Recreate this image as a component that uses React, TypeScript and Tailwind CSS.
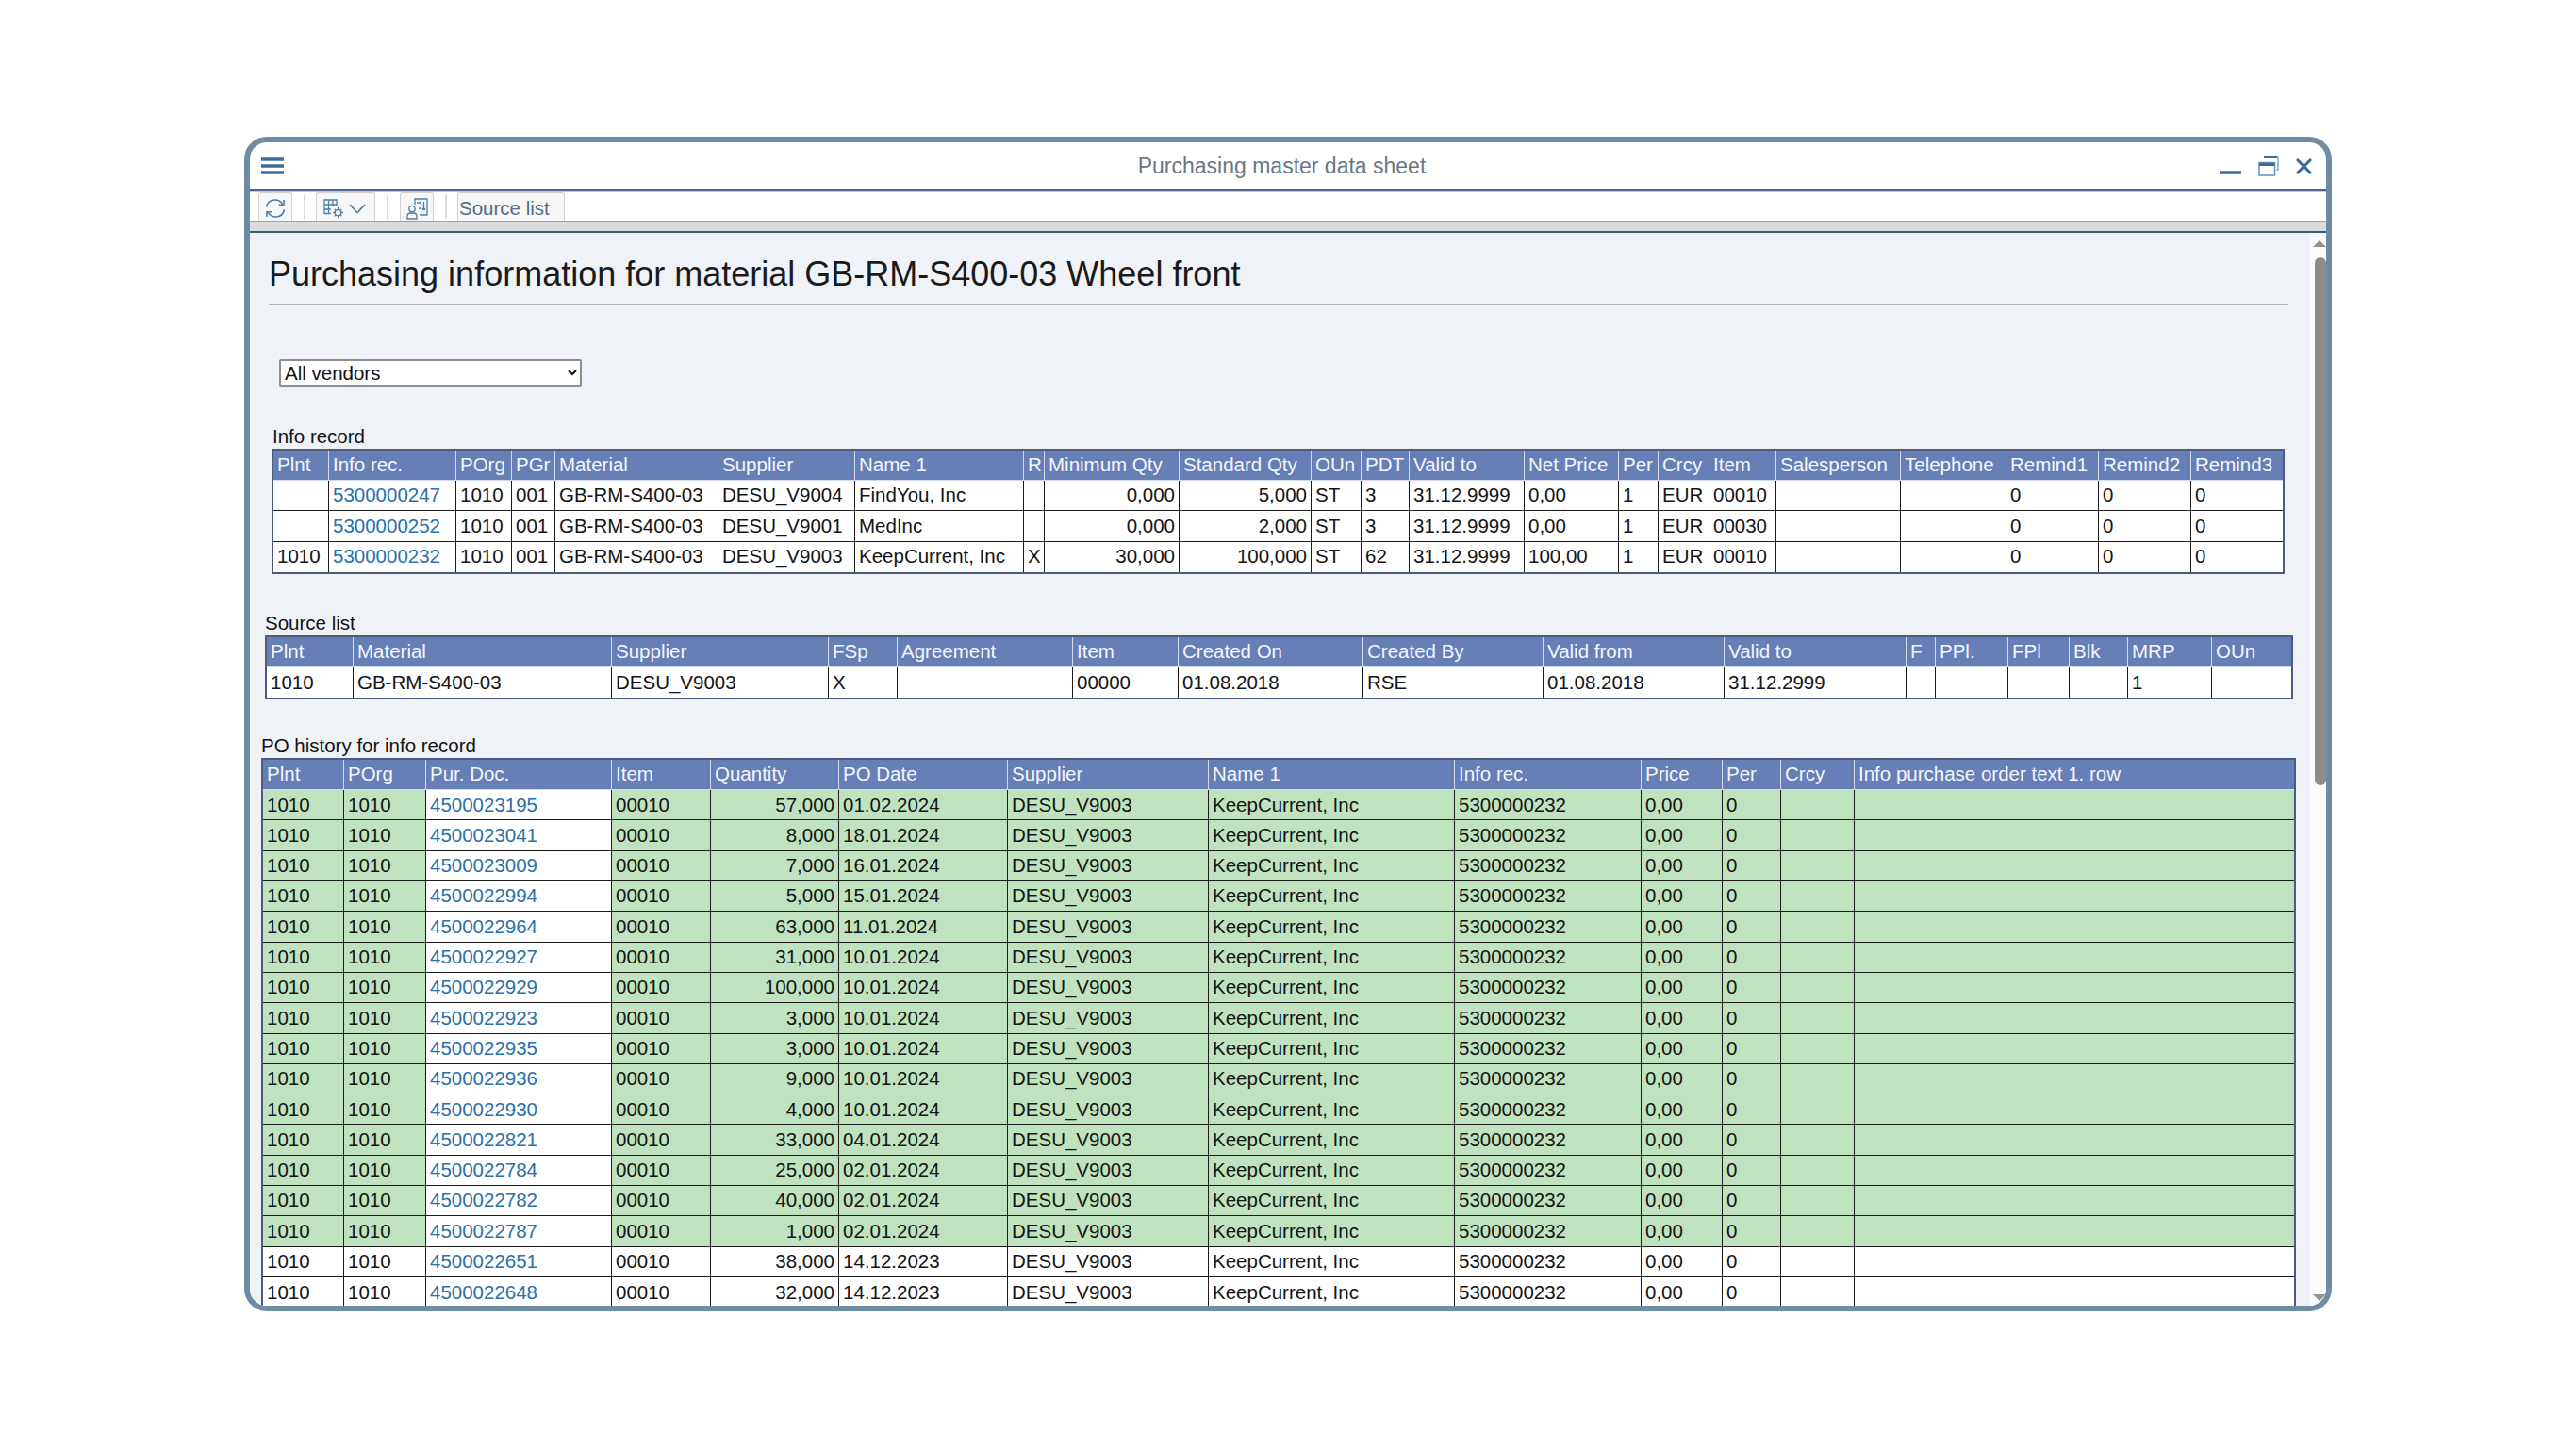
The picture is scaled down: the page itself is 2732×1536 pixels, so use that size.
type Col = { label: string; w: string; right?: boolean };

const font = "font-['Liberation_Sans',Arial,sans-serif]";

const infoCols: Col[] = [
  { label: 'Plnt', w: 'w-[59px]' },
  { label: 'Info rec.', w: 'w-[135px]' },
  { label: 'POrg', w: 'w-[59px]' },
  { label: 'PGr', w: 'w-[46px]' },
  { label: 'Material', w: 'w-[173px]' },
  { label: 'Supplier', w: 'w-[145px]' },
  { label: 'Name 1', w: 'w-[179px]' },
  { label: 'R', w: 'w-[22px]' },
  { label: 'Minimum Qty', w: 'w-[143px]', right: true },
  { label: 'Standard Qty', w: 'w-[140px]', right: true },
  { label: 'OUn', w: 'w-[53px]' },
  { label: 'PDT', w: 'w-[51px]' },
  { label: 'Valid to', w: 'w-[122px]' },
  { label: 'Net Price', w: 'w-[100px]' },
  { label: 'Per', w: 'w-[42px]' },
  { label: 'Crcy', w: 'w-[54px]' },
  { label: 'Item', w: 'w-[71px]' },
  { label: 'Salesperson', w: 'w-[132px]' },
  { label: 'Telephone', w: 'w-[112px]' },
  { label: 'Remind1', w: 'w-[98px]' },
  { label: 'Remind2', w: 'w-[98px]' },
  { label: 'Remind3', w: 'w-auto' },
];

const infoRows = [
  ['', '5300000247', '1010', '001', 'GB-RM-S400-03', 'DESU_V9004', 'FindYou, Inc', '', '0,000', '5,000', 'ST', '3', '31.12.9999', '0,00', '1', 'EUR', '00010', '', '', '0', '0', '0'],
  ['', '5300000252', '1010', '001', 'GB-RM-S400-03', 'DESU_V9001', 'MedInc', '', '0,000', '2,000', 'ST', '3', '31.12.9999', '0,00', '1', 'EUR', '00030', '', '', '0', '0', '0'],
  ['1010', '5300000232', '1010', '001', 'GB-RM-S400-03', 'DESU_V9003', 'KeepCurrent, Inc', 'X', '30,000', '100,000', 'ST', '62', '31.12.9999', '100,00', '1', 'EUR', '00010', '', '', '0', '0', '0'],
];

const sourceCols: Col[] = [
  { label: 'Plnt', w: 'w-[92px]' },
  { label: 'Material', w: 'w-[274px]' },
  { label: 'Supplier', w: 'w-[230px]' },
  { label: 'FSp', w: 'w-[73px]' },
  { label: 'Agreement', w: 'w-[186px]' },
  { label: 'Item', w: 'w-[112px]' },
  { label: 'Created On', w: 'w-[196px]' },
  { label: 'Created By', w: 'w-[191px]' },
  { label: 'Valid from', w: 'w-[192px]' },
  { label: 'Valid to', w: 'w-[193px]' },
  { label: 'F', w: 'w-[31px]' },
  { label: 'PPl.', w: 'w-[77px]' },
  { label: 'FPl', w: 'w-[65px]' },
  { label: 'Blk', w: 'w-[62px]' },
  { label: 'MRP', w: 'w-[89px]' },
  { label: 'OUn', w: 'w-auto' },
];

const sourceRows = [
  ['1010', 'GB-RM-S400-03', 'DESU_V9003', 'X', '', '00000', '01.08.2018', 'RSE', '01.08.2018', '31.12.2999', '', '', '', '', '1', ''],
];

const poCols: Col[] = [
  { label: 'Plnt', w: 'w-[86px]' },
  { label: 'POrg', w: 'w-[87px]' },
  { label: 'Pur. Doc.', w: 'w-[197px]' },
  { label: 'Item', w: 'w-[105px]' },
  { label: 'Quantity', w: 'w-[136px]', right: true },
  { label: 'PO Date', w: 'w-[179px]' },
  { label: 'Supplier', w: 'w-[213px]' },
  { label: 'Name 1', w: 'w-[261px]' },
  { label: 'Info rec.', w: 'w-[198px]' },
  { label: 'Price', w: 'w-[86px]' },
  { label: 'Per', w: 'w-[62px]' },
  { label: 'Crcy', w: 'w-[78px]' },
  { label: 'Info purchase order text 1. row', w: 'w-auto' },
];

const poData: [string, string, string, boolean][] = [
  ['4500023195', '57,000', '01.02.2024', true],
  ['4500023041', '8,000', '18.01.2024', true],
  ['4500023009', '7,000', '16.01.2024', true],
  ['4500022994', '5,000', '15.01.2024', true],
  ['4500022964', '63,000', '11.01.2024', true],
  ['4500022927', '31,000', '10.01.2024', true],
  ['4500022929', '100,000', '10.01.2024', true],
  ['4500022923', '3,000', '10.01.2024', true],
  ['4500022935', '3,000', '10.01.2024', true],
  ['4500022936', '9,000', '10.01.2024', true],
  ['4500022930', '4,000', '10.01.2024', true],
  ['4500022821', '33,000', '04.01.2024', true],
  ['4500022784', '25,000', '02.01.2024', true],
  ['4500022782', '40,000', '02.01.2024', true],
  ['4500022787', '1,000', '02.01.2024', true],
  ['4500022651', '38,000', '14.12.2023', false],
  ['4500022648', '32,000', '14.12.2023', false],
];

const DataTable = ({
  cols,
  rows,
  width,
  link,
  green,
}: {
  cols: Col[];
  rows: string[][];
  width: string;
  link: number;
  green?: boolean[];
}) => {
  return (
    <table className={`${width} table-fixed border-separate border-spacing-0 border-2 border-[#4f5b7c] text-[20.5px] leading-none`}>
      <colgroup>
        {cols.map((c, i) => (
          <col key={i} className={c.w} />
        ))}
      </colgroup>
      <thead>
        <tr className="h-[32px] bg-[#667fb7] text-[#f3f6fb]">
          {cols.map((c, i) => (
            <th
              key={i}
              className="overflow-hidden whitespace-nowrap border-r border-b border-[#d3dcee] px-1 text-left font-normal last:border-r-0"
            >
              {c.label}
            </th>
          ))}
        </tr>
      </thead>
      <tbody>
        {rows.map((row, r) => (
          <tr key={r} className="h-[32.3px]">
            {row.map((val, i) => (
              <td
                key={i}
                className={`overflow-hidden whitespace-nowrap border-r border-b border-[#1c1c1c] px-1 last:border-r-0 ${
                  r === rows.length - 1 ? 'border-b-0' : ''
                } ${cols[i].right ? 'text-right' : 'text-left'} ${
                  i === link ? 'bg-white text-[#2a70aa]' : green?.[r] ? 'bg-[#bfe3be] text-[#141414]' : 'bg-white text-[#141414]'
                }`}
              >
                {val}
              </td>
            ))}
          </tr>
        ))}
      </tbody>
    </table>
  );
};

const RefreshIcon = () => (
  <svg width="24" height="22" viewBox="0 0 24 22" fill="none" stroke="#4d7ea8" strokeWidth="1.6">
    <path d="M2.5 9.5C3.5 5 7 2 11.5 2c3.600 0 6.600 1.800 8.200 4.600" />
    <path d="M21 2v5.200h-5.200" />
    <path d="M21.500 12.500C20.500 17 17 20 12.500 20c-3.600 0-6.600-1.800-8.200-4.600" />
    <path d="M3 20v-5.200h5.200" />
  </svg>
);

const GridGearIcon = () => (
  <svg width="22" height="21" viewBox="0 0 22 21" fill="none" stroke="#4d7ea8" strokeWidth="1.3">
    <path d="M8 15.500H1V1h13v7" />
    <path d="M1 6h13M1 11h7M5.500 1v14.500M10 1v7" />
    <circle cx="15.500" cy="14.500" r="3.200" />
    <path d="M15.500 9v2M15.500 18v2M10 14.500h2M19 14.500h2M11.700 10.700l1.400 1.400M17.900 16.900l1.400 1.400M11.700 18.300l1.400-1.400M17.900 12.100l1.400-1.400" />
  </svg>
);

const PersonFlowIcon = () => (
  <svg width="23" height="23" viewBox="0 0 23 23" fill="none" stroke="#4d7ea8" strokeWidth="1.300">
    <circle cx="6" cy="11.500" r="3.200" />
    <path d="M1 22v-2.500c0-2 1.500-3.500 3.500-3.500h3c2 0 3.500 1.500 3.500 3.500V22z" />
    <path d="M9 7V1h13v17h-8" />
    <path d="M11 5h5M14 5l2-1.500M14 5l2 1.500M18.500 4v9M18.500 13l-1.600-1.800M18.500 13l1.600-1.800M13 11h2" />
  </svg>
);

const ToolButton = ({ children, className }: { children: React.ReactNode; className: string }) => (
  <div className={`flex h-[30px] items-center rounded-t-[3px] border border-b-0 border-[#d2d2d2] bg-[#f7f7f7] pt-[3px] ${className}`}>
    {children}
  </div>
);

const Sep = ({ className }: { className: string }) => <div className={`mb-[2px] h-[25px] w-[2px] bg-[#dcdcdc] ${className}`} />;

const App = () => {
  const poRows = poData.map(([doc, qty, date]) => [
    '1010',
    '1010',
    doc,
    '00010',
    qty,
    date,
    'DESU_V9003',
    'KeepCurrent, Inc',
    '5300000232',
    '0,00',
    '0',
    '',
    '',
  ]);
  const poGreen = poData.map((d) => d[3]);

  return (
    <div className={`flex h-screen items-center justify-center bg-white ${font}`}>
      <div className="flex h-[1246px] w-[2214px] flex-col overflow-hidden rounded-[24px] border-[6px] border-[#6f8ca5] bg-white">
        {/* title bar */}
        <div className="grid h-[52px] shrink-0 grid-cols-[1fr_auto_1fr] items-center border-b-2 border-b-[#46698c] pl-[12px] pr-[15px]">
          <svg width="24" height="18" viewBox="0 0 24 18" fill="none" stroke="#3f6c96" strokeWidth="3.400">
            <path d="M0 2h24M0 9h24M0 16h24" />
          </svg>
          <div className="pr-[10px] text-[23px] text-[#6b7782]">Purchasing master data sheet</div>
          <div className="flex items-center justify-end gap-[18px]">
            <svg width="23" height="22" viewBox="0 0 23 22" fill="none" stroke="#3a6b97" strokeWidth="3.600">
              <path d="M0 18h23" />
            </svg>
            <svg width="22" height="22" viewBox="0 0 22 22" fill="none">
              <path d="M1 7.500h16.500v13.500H1z" stroke="#5d8fbd" strokeWidth="1.400" />
              <path d="M1 9.500h16.500" stroke="#3a6b97" strokeWidth="2.800" />
              <path d="M6 1.500h14" stroke="#3a6b97" strokeWidth="3" />
              <path d="M21 1v14h-2" stroke="#5d8fbd" strokeWidth="1.200" />
            </svg>
            <svg width="17" height="17" viewBox="0 0 17 17" fill="none" stroke="#3a6b97" strokeWidth="3">
              <path d="M1 1l15 15M16 1L1 16" />
            </svg>
          </div>
        </div>

        {/* toolbar */}
        <div className="flex h-[33px] shrink-0 items-end border-t border-t-[#bccfe0] border-b-2 border-b-[#86a6c5] pl-[9px]">
          <ToolButton className="w-[36px] justify-center">
            <RefreshIcon />
          </ToolButton>
          <Sep className="ml-[12px]" />
          <ToolButton className="ml-[11px] w-[63px] gap-[5px] pl-[7px]">
            <GridGearIcon />
            <svg width="18" height="11" viewBox="0 0 18 11" fill="none" stroke="#4d7ea8" strokeWidth="1.600">
              <path d="M1 1l8 8.500L17 1" />
            </svg>
          </ToolButton>
          <Sep className="ml-[12px]" />
          <ToolButton className="ml-[12px] w-[36px] justify-center">
            <PersonFlowIcon />
          </ToolButton>
          <Sep className="ml-[12px]" />
          <ToolButton className="ml-[11px] w-[114px] pl-[1px] text-[20.5px] text-[#4c6d8c]">Source list</ToolButton>
        </div>

        <div className="h-[11px] shrink-0 border-b-2 border-b-[#2f6088] bg-[#dcdcdc]" />

        {/* body */}
        <div className="flex min-h-0 flex-1">
          <div className="min-w-0 flex-1 overflow-hidden bg-[#eff3f8] text-[#141414]">
            <div className="ml-[20px] mt-[22px] w-[2142px] border-b-2 border-b-[#b4b7ba] pb-[9px]">
              <h1 className="text-[36px] leading-[44px] font-normal text-[#1a1a1a]">
                Purchasing information for material GB-RM-S400-03 Wheel front
              </h1>
            </div>

            <select className="ml-[31px] mt-[57px] block h-[29px] w-[321px] rounded-[2px] border-2 border-[#8f8f8f] bg-white text-[20.5px] text-[#111]">
              <option>All vendors</option>
            </select>

            <div className="ml-[24px] mt-[41px] h-[25px] text-[20.5px] leading-[24px]">Info record</div>
            <div className="ml-[23px]">
              <DataTable cols={infoCols} rows={infoRows} width="w-[2135px]" link={1} />
            </div>

            <div className="ml-[16px] mt-[40px] h-[25px] text-[20.5px] leading-[24px]">Source list</div>
            <div className="ml-[16px]">
              <DataTable cols={sourceCols} rows={sourceRows} width="w-[2151px]" link={-1} />
            </div>

            <div className="ml-[12px] mt-[37px] h-[25px] text-[20.5px] leading-[24px]">PO history for info record</div>
            <div className="ml-[12px]">
              <DataTable cols={poCols} rows={poRows} width="w-[2158px]" link={2} green={poGreen} />
            </div>
          </div>

          {/* scrollbar */}
          <div className="flex w-[17px] shrink-0 flex-col items-end bg-[#fbfbfb] pt-[8px]">
            <div className="h-0 w-0 border-x-[7px] border-b-[7px] border-x-transparent border-b-[#919191]" />
            <div className="mt-[11px] h-[560px] w-[12px] rounded-t-[6px] rounded-b-[6px] bg-[#8c8c8c]" />
            <div className="mt-auto mb-[5px] h-0 w-0 border-x-[7px] border-t-[7px] border-x-transparent border-t-[#919191]" />
          </div>
        </div>
      </div>
    </div>
  );
};

export default App;
